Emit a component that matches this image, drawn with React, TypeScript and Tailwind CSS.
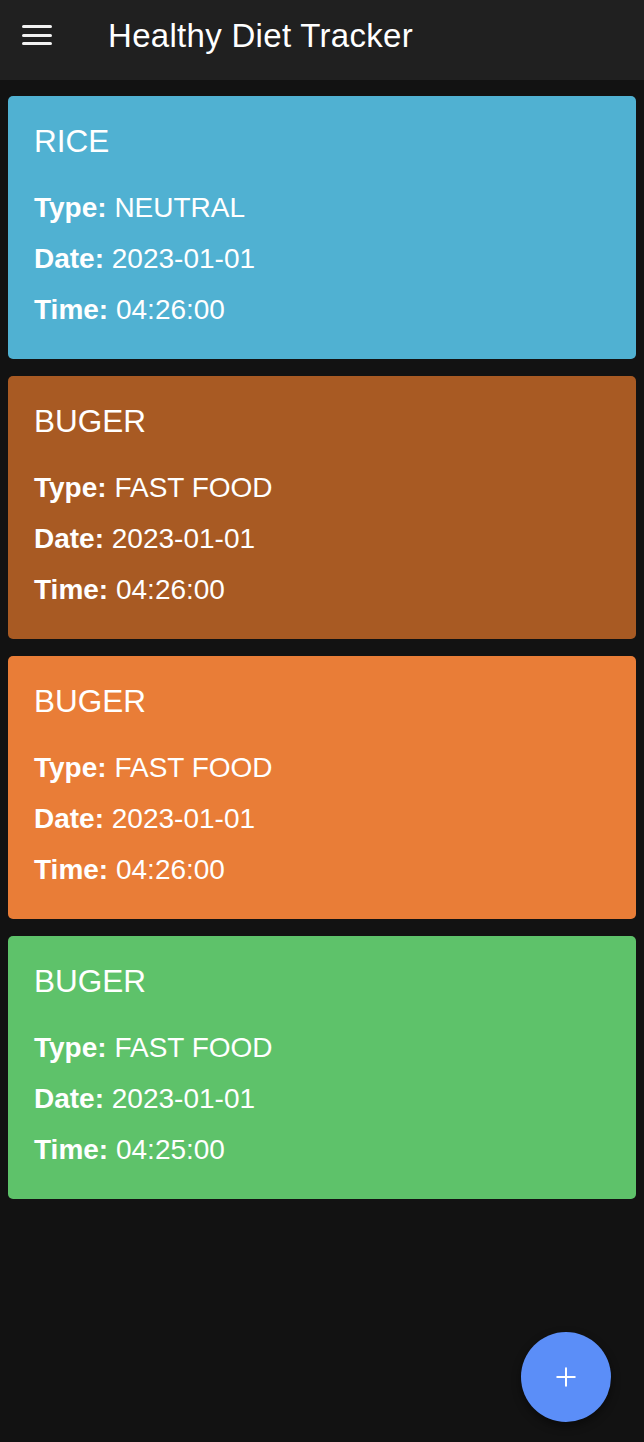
import { Plus } from "lucide-react"

type Meal = {
  name: string
  type: string
  date: string
  time: string
  color: string
}

const meals: Meal[] = [
  { name: "RICE", type: "NEUTRAL", date: "2023-01-01", time: "04:26:00", color: "bg-[#50b1d2]" },
  { name: "BUGER", type: "FAST FOOD", date: "2023-01-01", time: "04:26:00", color: "bg-[#a85a23]" },
  { name: "BUGER", type: "FAST FOOD", date: "2023-01-01", time: "04:26:00", color: "bg-[#e97d37]" },
  { name: "BUGER", type: "FAST FOOD", date: "2023-01-01", time: "04:25:00", color: "bg-[#5ec26a]" },
]

function MealCard({ meal }: { meal: Meal }) {
  return (
    <div className={`rounded-[5px] px-[26px] pt-[27px] pb-[24px] text-white ${meal.color}`}>
      <h2 className="text-[31.5px] leading-[36px]">{meal.name}</h2>
      <div className="mt-[23px] text-[28px] leading-[51px]">
        <p>
          <span className="font-bold">Type:</span> {meal.type}
        </p>
        <p>
          <span className="font-bold">Date:</span> {meal.date}
        </p>
        <p>
          <span className="font-bold">Time:</span> {meal.time}
        </p>
      </div>
    </div>
  )
}

export default function App() {
  return (
    <div className="relative h-screen overflow-hidden bg-[#121212] font-['Liberation_Sans',Arial,sans-serif]">
      <header className="flex h-20 items-start bg-[#202020] px-[22px]">
        <button className="mt-[25px] flex w-[30px] flex-col gap-[5.5px]">
          <span className="h-[3px] w-full rounded-sm bg-[#f2f2f2]" />
          <span className="h-[3px] w-full rounded-sm bg-[#f2f2f2]" />
          <span className="h-[3px] w-full rounded-sm bg-[#f2f2f2]" />
        </button>
        <h1 className="mt-[19px] ml-[56px] text-[33px] leading-none tracking-[0.3px] text-white">
          Healthy Diet Tracker
        </h1>
      </header>

      <main className="flex flex-col gap-[17px] px-2 pt-4">
        {meals.map((meal, index) => (
          <MealCard key={index} meal={meal} />
        ))}
      </main>

      <button className="absolute right-[33px] bottom-[20px] flex size-[90px] items-center justify-center rounded-full bg-[#5b8ef8] text-white shadow-[0_4px_10px_rgba(0,0,0,0.45)]">
        <Plus className="size-[30px]" strokeWidth={1.6} />
      </button>
    </div>
  )
}
